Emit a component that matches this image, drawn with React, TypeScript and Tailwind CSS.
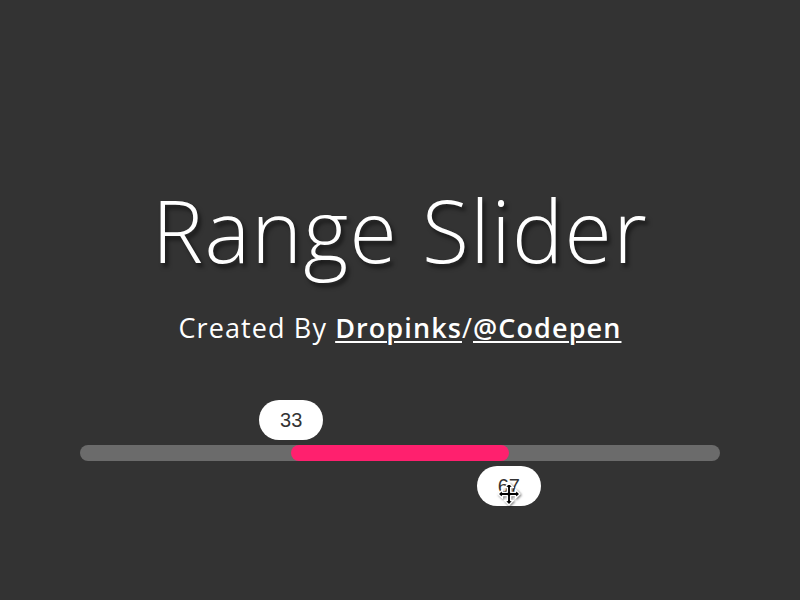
import { useState } from 'react';

function MoveCursor() {
  // four-way arrow pointer resting over the upper handle
  return (
    <svg width="24" height="24" viewBox="0 0 22 22" className="drop-shadow-[1px_1px_1px_rgba(0,0,0,0.5)]">
      <path
        d="M11 1 L15 5 L12.5 5 L12.5 9.5 L17 9.5 L17 7 L21 11 L17 15 L17 12.5 L12.5 12.5 L12.5 17 L15 17 L11 21 L7 17 L9.5 17 L9.5 12.5 L5 12.5 L5 15 L1 11 L5 7 L5 9.5 L9.5 9.5 L9.5 5 L7 5 Z"
        fill="#000"
        stroke="#fff"
        strokeWidth="1.3"
        strokeLinejoin="round"
      />
    </svg>
  );
}

export default function App() {
  const [low] = useState(33);
  const [high] = useState(67);

  return (
    <div className="w-full h-[600px] bg-[#333333] flex flex-col items-center overflow-hidden font-['Open_Sans',sans-serif]">
      <h1 className="mt-[187px] text-[86px] leading-none font-light tracking-[1.4px] text-white [text-shadow:3px_4px_4px_rgba(0,0,0,0.55)]">
        Range Slider
      </h1>
      <p className="mt-[41px] text-[27px] leading-none tracking-[1.1px] text-white font-normal">
        Created By{' '}
        <a className="font-semibold underline underline-offset-[3px] decoration-2">Dropinks</a>/
        <a className="font-semibold underline underline-offset-[3px] decoration-2">@Codepen</a>
      </p>

      <div className="mt-[104px] relative w-[640px] h-4 rounded-full bg-[#6b6b6b]">
        <div
          className="absolute top-0 h-4 rounded-full bg-[#ff206e]"
          style={{ left: `${low}%`, width: `${high - low}%` }}
        />
        <div
          className="absolute bottom-[21px] -translate-x-1/2 w-16 h-10 rounded-full bg-white flex items-center justify-center text-[20px] text-[#333] font-['Liberation_Sans',sans-serif]"
          style={{ left: `${low}%` }}
        >
          {low}
        </div>
        <div
          className="absolute top-[21px] -translate-x-1/2 w-16 h-10 rounded-full bg-white flex items-center justify-center text-[20px] text-[#333] font-['Liberation_Sans',sans-serif]"
          style={{ left: `${high}%` }}
        >
          {high}
          <div className="absolute left-[20px] top-[16px]">
            <MoveCursor />
          </div>
        </div>
      </div>
    </div>
  );
}
